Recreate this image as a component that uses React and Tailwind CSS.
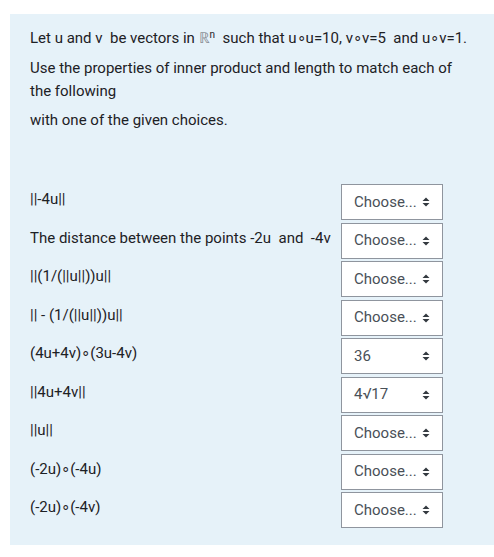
import React from 'react';

const rows = [
  { label: '||-4u||', value: 'Choose...' },
  { label: 'The distance between the points -2u  and  -4v', value: 'Choose...' },
  { label: '||(1/(||u||))u||', value: 'Choose...' },
  { label: '|| - (1/(||u||))u||', value: 'Choose...' },
  { label: '(4u+4v)∘(3u-4v)', value: '36' },
  { label: '||4u+4v||', value: '4√17' },
  { label: '||u||', value: 'Choose...' },
  { label: '(-2u)∘(-4u)', value: 'Choose...' },
  { label: '(-2u)∘(-4v)', value: 'Choose...' },
];

const Arrows = () => (
  <svg width="8" height="10" viewBox="0 0 8 10" className="shrink-0">
    <path d="M0.5 4 L4 0.5 L7.5 4 Z M0.5 6 L4 9.5 L7.5 6 Z" fill="#343a40" />
  </svg>
);

const App = () => {
  return (
    <div className="min-h-screen bg-white pt-[14px] pl-[10px] font-['Roboto',sans-serif] text-[15px] leading-[22.5px] text-[#1d2125]">
      <div className="h-[531px] bg-[#e6f2f9] pl-[20px] pt-[13px]">
        {/* question text */}
        <p className="mb-[7.5px] whitespace-pre">
          {'Let u and v  be vectors in '}
          <span className="text-[#8a9096]">ℝ</span>
          <sup className="text-[10px] text-[#1d2125]">n</sup>
          {'  such that u∘u=10, v∘v=5  and u∘v=1.'}
        </p>
        <p className="mb-[7px] w-[440px]">
          Use the properties of inner product and length to match each of the following
        </p>
        <p>with one of the given choices.</p>

        {/* match rows */}
        <div className="mt-[52.5px] flex flex-col">
          {rows.map((row, i) => (
            <div key={i} className="flex h-[38.5px]">
              <div className="w-[311px] pt-[4px] whitespace-pre">{row.label}</div>
              <div className="flex h-[36px] w-[102px] items-center justify-between border border-[#8f959e] bg-white pl-[12px] pr-[12px] text-[#495057]">
                <span>{row.value}</span>
                <Arrows />
              </div>
            </div>
          ))}
        </div>
      </div>
    </div>
  );
};

export default App;
